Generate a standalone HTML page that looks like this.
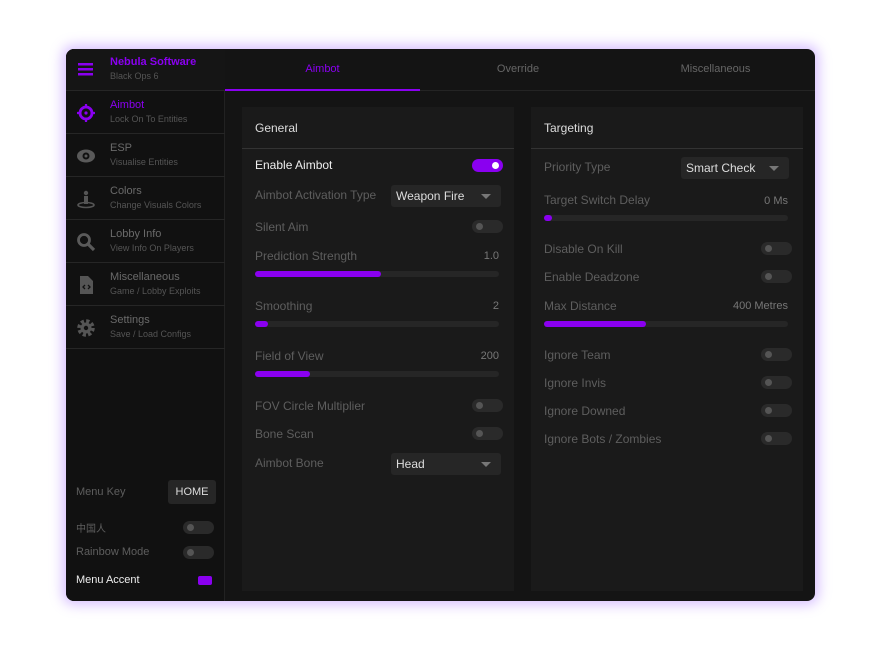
<!DOCTYPE html>
<html><head><style>
*{margin:0;padding:0;box-sizing:border-box}
body{width:881px;height:653px;background:#fff;font-family:"Liberation Sans","Noto Sans CJK SC",sans-serif;position:relative;overflow:hidden}
.win{position:absolute;left:66px;top:49px;width:749px;height:552px;background:#141414;border-radius:8px;box-shadow:0 0 12px 4px rgba(170,120,255,.45);overflow:hidden}
.side{position:absolute;left:0;top:0;width:159px;height:552px;background:#111;border-right:1px solid #222}
.it{position:absolute;left:0;width:159px;height:43px;border-bottom:1px solid #262626}
.it .t{position:absolute;left:44px;top:8px;font-size:11px;color:#6a6a6a}
.it .s{position:absolute;left:44px;top:23px;font-size:9px;color:#555}
.ic{position:absolute;left:10px;top:12px;width:20px;height:20px}
.a{position:absolute}
.lbl{position:absolute;font-size:12px;color:#5e5e5e}
.tg{position:absolute;width:31px;height:13px;border-radius:7px;background:#2a2a2a}
.tg:after{content:"";position:absolute;left:4px;top:3px;width:7px;height:7px;border-radius:50%;background:#555}
.tg.on{background:#8a00f0}.tg.on:after{left:20px;background:#fff}
.dd{position:absolute;height:22px;background:#262626;border-radius:3px;color:#ddd;font-size:12px;padding:4px 5px}
.dd:after{content:"";position:absolute;right:10px;top:9px;border:5px solid transparent;border-top:5px solid #777;border-bottom:0}
.sl{position:absolute;height:6px;background:#262626;border-radius:3px}
.sl i{position:absolute;left:0;top:0;height:6px;background:#8a00f0;border-radius:3px}
.pn{position:absolute;top:58px;width:272px;height:484px;background:#1a1a1a}
.ph{position:absolute;left:0;top:0;width:100%;height:42px;border-bottom:1px solid #333;color:#ddd;font-size:12px;padding:14px 13px}
.v{position:absolute;font-size:11px;color:#777;right:15px;text-align:right}
</style></head><body>
<div class="win">
<div class="side">
 <div class="it" style="top:0;height:42px;background:#151515">
  <svg class="ic" style="top:10px" viewBox="0 0 20 20"><rect x="2" y="4" width="15" height="2.5" fill="#8a00f0"/><rect x="2" y="9" width="15" height="2.5" fill="#8a00f0"/><rect x="2" y="14" width="15" height="2.5" fill="#8a00f0"/></svg>
  <div class="t" style="top:7px;color:#8a00f0;font-weight:bold">Nebula Software</div><div class="s" style="top:22px">Black Ops 6</div></div>
 <div class="it" style="top:42px"><svg class="ic" viewBox="0 0 20 20"><circle cx="10" cy="10" r="6" fill="none" stroke="#8a00f0" stroke-width="2.8"/><circle cx="10" cy="10" r="1.6" fill="#8a00f0"/><path d="M10 1v4.5M10 14.5v4.5M1 10h4.5M14.5 10h4.5" stroke="#8a00f0" stroke-width="2.2"/></svg><div class="t" style="color:#8a00f0">Aimbot</div><div class="s">Lock On To Entities</div></div>
 <div class="it" style="top:85px"><svg class="ic" viewBox="0 0 20 20"><ellipse cx="10" cy="10" rx="9" ry="6.5" fill="#5a5a5a"/><circle cx="10" cy="10" r="3.5" fill="#111"/><circle cx="10" cy="10" r="1.5" fill="#5a5a5a"/></svg><div class="t">ESP</div><div class="s">Visualise Entities</div></div>
 <div class="it" style="top:128px"><svg class="ic" viewBox="0 0 20 20"><circle cx="10" cy="4" r="2.2" fill="#555"/><rect x="8" y="7" width="4" height="8" fill="#555"/><ellipse cx="10" cy="16" rx="8" ry="2.5" fill="none" stroke="#555" stroke-width="1.6"/></svg><div class="t">Colors</div><div class="s">Change Visuals Colors</div></div>
 <div class="it" style="top:171px"><svg class="ic" viewBox="0 0 20 20"><circle cx="8" cy="8" r="5.5" fill="none" stroke="#5a5a5a" stroke-width="2.8"/><path d="M12 12l6 6" stroke="#5a5a5a" stroke-width="3.2"/></svg><div class="t">Lobby Info</div><div class="s">View Info On Players</div></div>
 <div class="it" style="top:214px"><svg class="ic" viewBox="0 0 20 20"><path d="M4 1h8l5 5v13H4z" fill="#555"/><path d="M9 10l-2 2 2 2M12 10l2 2-2 2" stroke="#111" fill="none" stroke-width="1.3"/></svg><div class="t">Miscellaneous</div><div class="s">Game / Lobby Exploits</div></div>
 <div class="it" style="top:257px"><svg class="ic" viewBox="0 0 20 20"><circle cx="10" cy="10" r="6.5" fill="none" stroke="#555" stroke-width="4.5" stroke-dasharray="3 2.1"/><circle cx="10" cy="10" r="5.5" fill="#555"/><circle cx="10" cy="10" r="2.2" fill="#111"/></svg><div class="t">Settings</div><div class="s">Save / Load Configs</div></div>
 <div class="lbl" style="left:10px;top:437px;font-size:11px">Menu Key</div>
 <div class="a" style="left:102px;top:431px;width:48px;height:24px;background:#262626;border-radius:3px;color:#ddd;font-size:11px;text-align:center;line-height:24px">HOME</div>
 <div class="lbl" style="left:10px;top:471px;font-size:10px">中国人</div><div class="tg" style="left:117px;top:472px"></div>
 <div class="lbl" style="left:10px;top:497px;font-size:11px">Rainbow Mode</div><div class="tg" style="left:117px;top:497px"></div>
 <div class="lbl" style="left:10px;top:525px;font-size:11px;color:#eee">Menu Accent</div>
 <div class="a" style="left:132px;top:527px;width:14px;height:9px;background:#8a00f0;border-radius:2px"></div>
</div>
<div class="a" style="left:159px;top:0;width:590px;height:42px;border-bottom:1px solid #242424"></div>
<div class="a" style="left:159px;top:0;width:195px;height:42px;text-align:center;line-height:40px;font-size:11px;color:#8a00f0;border-bottom:2px solid #8a00f0">Aimbot</div>
<div class="a" style="left:354px;top:0;width:196px;height:42px;text-align:center;line-height:40px;font-size:11px;color:#666">Override</div>
<div class="a" style="left:550px;top:0;width:199px;height:42px;text-align:center;line-height:40px;font-size:11px;color:#666">Miscellaneous</div>

<div class="pn" style="left:176px">
 <div class="ph">General</div>
 <div class="lbl" style="left:13px;top:51px;color:#eee">Enable Aimbot</div><div class="tg on" style="left:230px;top:52px"></div>
 <div class="lbl" style="left:13px;top:81px">Aimbot Activation Type</div><div class="dd" style="left:149px;top:78px;width:110px">Weapon Fire</div>
 <div class="lbl" style="left:13px;top:113px">Silent Aim</div><div class="tg" style="left:230px;top:113px"></div>
 <div class="lbl" style="left:13px;top:142px">Prediction Strength</div><div class="v" style="top:143px">1.0</div>
 <div class="sl" style="left:13px;top:164px;width:244px"><i style="width:126px"></i></div>
 <div class="lbl" style="left:13px;top:192px">Smoothing</div><div class="v" style="top:193px">2</div>
 <div class="sl" style="left:13px;top:214px;width:244px"><i style="width:13px"></i></div>
 <div class="lbl" style="left:13px;top:242px">Field of View</div><div class="v" style="top:243px">200</div>
 <div class="sl" style="left:13px;top:264px;width:244px"><i style="width:55px"></i></div>
 <div class="lbl" style="left:13px;top:292px">FOV Circle Multiplier</div><div class="tg" style="left:230px;top:292px"></div>
 <div class="lbl" style="left:13px;top:320px">Bone Scan</div><div class="tg" style="left:230px;top:320px"></div>
 <div class="lbl" style="left:13px;top:349px">Aimbot Bone</div><div class="dd" style="left:149px;top:346px;width:110px">Head</div>
</div>
<div class="pn" style="left:465px">
 <div class="ph">Targeting</div>
 <div class="lbl" style="left:13px;top:53px">Priority Type</div><div class="dd" style="left:150px;top:50px;width:108px">Smart Check</div>
 <div class="lbl" style="left:13px;top:86px">Target Switch Delay</div><div class="v" style="top:88px">0 Ms</div>
 <div class="sl" style="left:13px;top:108px;width:244px"><i style="width:8px"></i></div>
 <div class="lbl" style="left:13px;top:135px">Disable On Kill</div><div class="tg" style="left:230px;top:135px"></div>
 <div class="lbl" style="left:13px;top:163px">Enable Deadzone</div><div class="tg" style="left:230px;top:163px"></div>
 <div class="lbl" style="left:13px;top:192px">Max Distance</div><div class="v" style="top:193px">400 Metres</div>
 <div class="sl" style="left:13px;top:214px;width:244px"><i style="width:102px"></i></div>
 <div class="lbl" style="left:13px;top:241px">Ignore Team</div><div class="tg" style="left:230px;top:241px"></div>
 <div class="lbl" style="left:13px;top:269px">Ignore Invis</div><div class="tg" style="left:230px;top:269px"></div>
 <div class="lbl" style="left:13px;top:297px">Ignore Downed</div><div class="tg" style="left:230px;top:297px"></div>
 <div class="lbl" style="left:13px;top:325px">Ignore Bots / Zombies</div><div class="tg" style="left:230px;top:325px"></div>
</div>
</div>
</body></html>
